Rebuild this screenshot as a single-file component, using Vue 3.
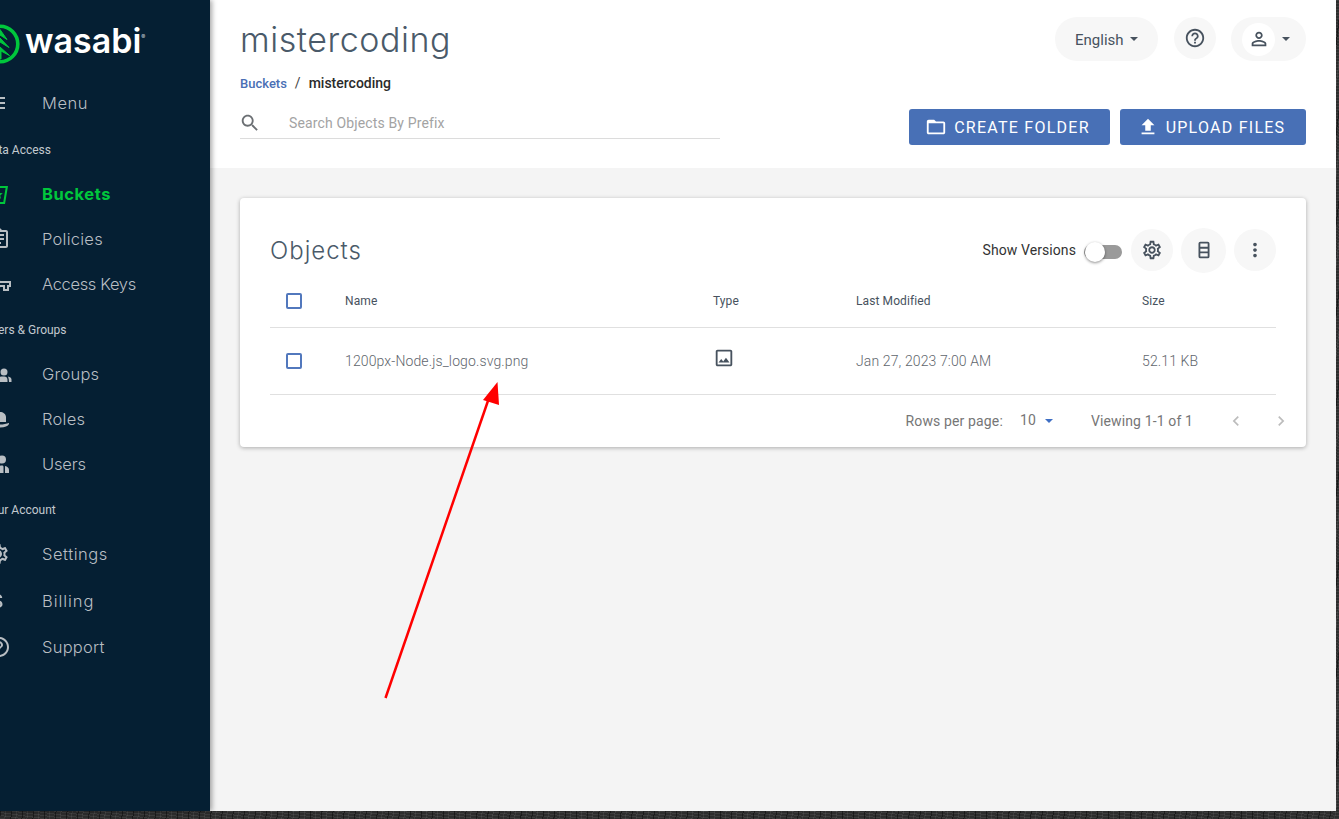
<script setup>
const P = {
  menu: 'M3 18h18v-2H3v2zm0-5h18v-2H3v2zm0-7v2h18V6H3z',
  bucket: 'M2 4h20l-3 18H5L2 4zm2.400 2 2.300 14h10.600l2.300-14H4.400zM12 8l1.400 3 3.400.3-2.600 2.200.8 3.300-3-1.800-3 1.800.8-3.300-2.600-2.200 3.400-.3L12 8z',
  policy: 'M19 3h-4.180C14.400 1.840 13.300 1 12 1s-2.400.84-2.820 2H5c-1.100 0-2 .9-2 2v14c0 1.100.9 2 2 2h14c1.100 0 2-.9 2-2V5c0-1.100-.9-2-2-2zm-7-.25c.41 0 .75.34.75.75s-.34.75-.75.75-.75-.34-.75-.75.34-.75.75-.75zM19 19H5V5h14v14zM7 15h7v2H7zm0-4h10v2H7zm0-4h10v2H7z',
  key: 'M22 19h-6v-4h-2.680c-1.140 2.420-3.600 4-6.320 4-3.860 0-7-3.140-7-7s3.140-7 7-7c2.720 0 5.170 1.580 6.320 4H24v6h-2v4zm-4-2h2v-4h2v-2H11.940l-.23-.67C11.010 8.340 9.110 7 7 7c-2.760 0-5 2.240-5 5s2.240 5 5 5c2.110 0 4.010-1.340 4.710-3.330l.23-.67H18v4z',
  groups: 'M18 6.500a3.500 3.500 0 1 1 0 7 3.500 3.500 0 0 1 0-7zM8 20v-1.500c0-2.500 5-4 9-4s4.500 1.500 4.500 4V20H8zm14-5.500c2 .3 3.500 1.500 3.500 3V20H23c0-2-.3-3.800-1-5.500z',
  hat: 'M8 15V9c0-3 3-4 6-4s6 2 6 5v5H8zM5 16.500c3 1.500 13 1.500 18-.500v1c-1 2-4 3.500-9 3.500S6 19 5 17.500v-1z',
  users: 'M16 3.500a4 4 0 1 1 0 8 4 4 0 0 1 0-8zM8 21v-3c0-2.500 4-4.500 8-4.500.8 0 1.500.1 1.500 1.500v6H8zm11-7c2.500.6 4 2 4 4v3h-4v-7z',
  settings: 'M19.430 12.980c.04-.32.07-.64.07-.98 0-.34-.03-.66-.07-.98l2.110-1.650c.19-.15.24-.42.12-.64l-2-3.460c-.09-.16-.26-.25-.44-.25-.06 0-.12.01-.17.03l-2.490 1c-.52-.4-1.080-.73-1.690-.98l-.38-2.650C14.460 2.180 14.250 2 14 2h-4c-.25 0-.46.18-.49.42l-.38 2.650c-.61.25-1.170.59-1.690.98l-2.490-1c-.06-.02-.12-.03-.18-.03-.17 0-.34.09-.43.25l-2 3.460c-.13.22-.07.49.12.64l2.110 1.650c-.04.32-.07.65-.07.98 0 .33.03.66.07.98l-2.110 1.650c-.19.15-.24.42-.12.64l2 3.460c.09.16.26.25.44.25.06 0 .12-.01.17-.03l2.490-1c.52.4 1.080.73 1.690.98l.38 2.650c.03.24.24.42.49.42h4c.25 0 .46-.18.49-.42l.38-2.650c.61-.25 1.170-.59 1.690-.98l2.490 1c.06.02.12.03.18.03.17 0 .34-.09.43-.25l2-3.460c.12-.22.07-.49-.12-.64l-2.110-1.650zm-1.980-1.710c.04.31.05.52.05.73 0 .21-.02.43-.05.73l-.14 1.130.89.7 1.080.84-.7 1.210-1.270-.51-1.040-.42-.9.68c-.43.32-.84.56-1.250.73l-1.060.43-.16 1.130-.2 1.350h-1.400l-.19-1.350-.16-1.130-1.060-.43c-.43-.18-.83-.41-1.230-.71l-.91-.7-1.060.43-1.270.51-.7-1.210 1.080-.84.89-.7-.14-1.130c-.03-.31-.05-.54-.05-.74s.02-.43.05-.73l.14-1.130-.89-.7-1.080-.84.7-1.210 1.270.51 1.040.42.9-.68c.43-.32.84-.56 1.250-.73l1.060-.43.16-1.130.2-1.350h1.390l.19 1.350.16 1.130 1.060.43c.43.18.83.41 1.230.71l.91.7 1.060-.43 1.270-.51.7 1.210-1.070.85-.89.7.14 1.130zM12 8c-2.210 0-4 1.790-4 4s1.790 4 4 4 4-1.790 4-4-1.790-4-4-4zm0 6c-1.100 0-2-.9-2-2s.9-2 2-2 2 .9 2 2-.9 2-2 2z',
  dollar: 'M11.800 10.900c-2.270-.59-3-1.200-3-2.150 0-1.090 1.010-1.850 2.700-1.850 1.780 0 2.440.85 2.500 2.100h2.210c-.07-1.720-1.120-3.300-3.210-3.810V3h-3v2.160c-1.940.42-3.500 1.680-3.500 3.610 0 2.310 1.910 3.460 4.700 4.130 2.500.6 3 1.480 3 2.410 0 .69-.49 1.790-2.700 1.790-2.060 0-2.870-.92-2.980-2.100h-2.200c.12 2.190 1.760 3.420 3.680 3.830V21h3v-2.150c1.950-.37 3.500-1.500 3.500-3.550 0-2.840-2.430-3.810-4.700-4.400z',
  help: 'M11 18h2v-2h-2v2zm1-16C6.480 2 2 6.480 2 12s4.480 10 10 10 10-4.480 10-10S17.520 2 12 2zm0 18c-4.410 0-8-3.590-8-8s3.590-8 8-8 8 3.590 8 8-3.590 8-8 8zm0-14c-2.210 0-4 1.790-4 4h2c0-1.100.9-2 2-2s2 .9 2 2c0 2-3 1.750-3 5h2c0-2.250 3-2.500 3-5 0-2.210-1.790-4-4-4z',
  person: 'M12 5.900c1.160 0 2.100.94 2.100 2.100s-.94 2.100-2.100 2.100S9.900 9.160 9.900 8s.94-2.100 2.100-2.100m0 9c2.970 0 6.100 1.460 6.100 2.100v1.100H5.900V17c0-.64 3.130-2.100 6.100-2.100M12 4C9.790 4 8 5.790 8 8s1.790 4 4 4 4-1.790 4-4-1.790-4-4-4zm0 9c-2.670 0-8 1.340-8 4v3h16v-3c0-2.660-5.330-4-8-4z',
  folder: 'M20 6h-8l-2-2H4c-1.100 0-1.990.9-1.990 2L2 18c0 1.100.9 2 2 2h16c1.100 0 2-.9 2-2V8c0-1.100-.9-2-2-2zm0 12H4V8h16v10z',
  upload: 'M9 16h6v-6h4l-7-7-7 7h4zm-4 2h14v2H5z',
  image: 'M19 5v14H5V5h14m0-2H5c-1.100 0-2 .9-2 2v14c0 1.100.9 2 2 2h14c1.100 0 2-.9 2-2V5c0-1.100-.9-2-2-2zm-4.860 8.860l-3 3.870L9 13.140 6 17h12l-3.860-5.140z',
  more: 'M12 8c1.100 0 2-.9 2-2s-.9-2-2-2-2 .9-2 2 .9 2 2 2zm0 2c-1.100 0-2 .9-2 2s.9 2 2 2 2-.9 2-2-.9-2-2-2zm0 6c-1.100 0-2 .9-2 2s.9 2 2 2 2-.9 2-2-.9-2-2-2z',
  search: 'M15.500 14h-.79l-.28-.27C15.410 12.590 16 11.110 16 9.500 16 5.910 13.090 3 9.500 3S3 5.910 3 9.500 5.910 16 9.500 16c1.610 0 3.090-.59 4.230-1.570l.27.28v.79l5 4.990L20.490 19l-4.990-5zm-6 0C7.010 14 5 11.990 5 9.500S7.010 5 9.500 5 14 7.010 14 9.500 11.990 14 9.500 14z',
  left: 'M15.410 7.410L14 6l-6 6 6 6 1.410-1.410L10.830 12z',
  right: 'M10 6L8.590 7.410 13.170 12l-4.580 4.590L10 18l6-6z',
  columns: 'M8 3h8a2 2 0 0 1 2 2v14a2 2 0 0 1-2 2H8a2 2 0 0 1-2-2V5a2 2 0 0 1 2-2zm0 2v3.500h8V5H8zm0 5.500v3h8v-3H8zm0 5V19h8v-3.500H8z'
}

const nav = [
  { type: 'item', label: 'Menu', icon: P.menu, cls: 'gap1 wide', vb: '2 0 24 24' },
  { type: 'group', label: 'Data Access' },
  { type: 'item', label: 'Buckets', icon: P.bucket, cls: 'active wide' },
  { type: 'item', label: 'Policies', icon: P.policy, vb: '-1 0 24 24' },
  { type: 'item', label: 'Access Keys', icon: P.key, cls: 'tight', vb: '-1 0 24 24' },
  { type: 'group', label: 'Users & Groups' },
  { type: 'item', label: 'Groups', icon: P.groups },
  { type: 'item', label: 'Roles', icon: P.hat },
  { type: 'item', label: 'Users', icon: P.users, cls: 'snug' },
  { type: 'group', label: 'Your Account' },
  { type: 'item', label: 'Settings', icon: P.settings, cls: 'gap2 wide' },
  { type: 'item', label: 'Billing', icon: P.dollar, cls: 'gap1 wider' },
  { type: 'item', label: 'Support', icon: P.help, vb: '-1 0 24 24' }
]
</script>

<template>
  <div class="screen">
    <div class="window">
      <aside class="sidebar">
        <div class="logo">
          <svg class="logo-mark" viewBox="0 0 40 40">
            <circle cx="20" cy="20" r="17.800" fill="none" stroke="#00c73c" stroke-width="3.600" />
            <path d="M20 5.500l7 10-7-4.500-7 4.500zM20 14l9 9.500-9-5.500-9 5.500zM20 23l9.500 8.500-8.500-4.500v8h-2v-8l-8.500 4.500z" fill="#00c73c" stroke="#00c73c" stroke-width="1" />
          </svg>
          <span class="logo-text">wasabi</span>
          <span class="logo-reg">®</span>
        </div>
        <nav>
          <template v-for="n in nav" :key="n.label">
            <div v-if="n.type === 'group'" class="group">{{ n.label }}</div>
            <div v-else class="item" :class="n.cls">
              <svg class="nav-icon" :viewBox="n.vb || '0 0 24 24'"><path :d="n.icon" fill="currentColor" /></svg>
              <span class="item-label">{{ n.label }}</span>
            </div>
          </template>
        </nav>
      </aside>

      <main class="main">
        <header class="head">
          <div class="head-left">
            <h1>mistercoding</h1>
            <div class="crumbs"><a>Buckets</a><i>/</i><b>mistercoding</b></div>
            <div class="search">
              <svg viewBox="0 0 24 24"><path :d="P.search" fill="#6b6f73" /></svg>
              <span>Search Objects By Prefix</span>
            </div>
          </div>
          <div class="head-right">
            <div class="tools">
              <div class="pill lang"><span class="lang-text">English</span><span class="caret"></span></div>
              <div class="round"><svg viewBox="0 0 24 24"><path :d="P.help" fill="#47525e" /></svg></div>
              <div class="pill user">
                <span class="avatar"><svg viewBox="0 0 24 24"><path :d="P.person" fill="#47525e" /></svg></span>
                <span class="caret"></span>
              </div>
            </div>
            <div class="actions">
              <button class="btn folder"><svg viewBox="0 0 24 24"><path :d="P.folder" fill="#fff" /></svg>CREATE FOLDER</button>
              <button class="btn upload"><svg viewBox="0 0 24 24"><path :d="P.upload" fill="#fff" /></svg>UPLOAD FILES</button>
            </div>
          </div>
        </header>

        <section class="body">
          <div class="card">
            <div class="card-head">
              <h2>Objects</h2>
              <div class="card-tools">
                <span class="versions">Show Versions</span>
                <span class="switch"><span class="thumb"></span></span>
                <span class="tool gear"><svg viewBox="0 0 24 24"><path :d="P.settings" fill="#47525e" /></svg></span>
                <span class="tool cols"><svg viewBox="0 0 24 24"><path :d="P.columns" fill="#47525e" /></svg></span>
                <span class="tool"><svg viewBox="0 0 24 24"><path :d="P.more" fill="#47525e" /></svg></span>
              </div>
            </div>
            <div class="row row-head">
              <span class="check"></span>
              <span>Name</span><span>Type</span><span>Last Modified</span><span>Size</span>
            </div>
            <div class="row row-body">
              <span class="check"></span>
              <span>1200px-Node.js_logo.svg.png</span>
              <span class="type"><svg viewBox="0 0 24 24"><path :d="P.image" fill="#47525e" /></svg></span>
              <span>Jan 27, 2023 7:00 AM</span>
              <span>52.11 KB</span>
            </div>
            <div class="pager">
              <span class="rows">Rows per page:</span>
              <span class="count">10</span>
              <span class="caret blue"></span>
              <span class="viewing">Viewing 1-1 of 1</span>
              <svg class="chev" viewBox="0 0 24 24"><path :d="P.left" fill="#bcbcbc" /></svg>
              <svg class="chev next" viewBox="0 0 24 24"><path :d="P.right" fill="#bcbcbc" /></svg>
            </div>
          </div>
        </section>
      </main>
    </div>
    <svg class="arrow" width="1339" height="819" viewBox="0 0 1339 819">
      <path d="M385.500 698 490 395" stroke="#ff0000" stroke-width="2.500" fill="none" />
      <path d="M497.500 382 499 405 483 400z" fill="#ff0000" />
    </svg>
  </div>
</template>

<style>
html, body { margin: 0; background: #2c2c2c; }
</style>

<style scoped>
.screen {
  position: relative;
  width: 1339px;
  height: 819px;
  overflow: hidden;
  background:
    repeating-linear-gradient(97deg, rgba(0,0,0,.45) 0 1px, transparent 1px 5px, rgba(255,255,255,.07) 5px 6px, transparent 6px 11px),
    repeating-linear-gradient(8deg, rgba(255,255,255,.07) 0 1px, transparent 1px 3px),
    #2d2d2d;
  font-family: Roboto, "Liberation Sans", sans-serif;
}
.window { display: flex; width: 1336px; height: 811px; background: #f4f4f4; }

.sidebar {
  flex: 0 0 210px;
  height: 811px;
  background: #051f33;
  box-shadow: 2px 0 5px rgba(0, 0, 0, .35);
  overflow: hidden;
  position: relative;
  z-index: 2;
}
.logo { display: flex; align-items: center; height: 80px; margin-left: -20px; padding-top: 8px; box-sizing: border-box; color: #fff; }
.logo-mark { flex: 0 0 40px; width: 40px; height: 40px; }
.logo-text { margin-left: 5px; font: 600 34px/1 Inter, sans-serif; padding-bottom: 6px; }
.logo-reg { font: 400 6px/1 Inter, sans-serif; align-self: flex-start; margin-top: 26px; color: #c9d1d8; }

.group { height: 45px; line-height: 48px; margin-left: -16px; font-size: 12px; color: #c3c9cf; white-space: nowrap; }
.item { display: flex; align-items: center; height: 45px; margin-left: -14px; color: #b9bec3; font: 300 16.500px/1 Inter, sans-serif; letter-spacing: .25px; }
.item-label { padding-top: 2px; }
.item.gap1 { margin-bottom: 1px; }
.item.gap2 { margin-bottom: 2px; }
.item.wide { letter-spacing: .55px; }
.item.wider { letter-spacing: .95px; }
.item.snug { letter-spacing: -.15px; }
.item.tight { letter-spacing: -.35px; }
.item.active { color: #00c73c; font-weight: 700; }
.nav-icon { flex: 0 0 24px; width: 24px; height: 24px; margin-right: 32px; overflow: visible; }

.main { flex: 1; display: flex; flex-direction: column; min-width: 0; }
.head { display: flex; justify-content: space-between; height: 168px; box-sizing: border-box; padding: 0 30px; background: #fff; }
.head-left { width: 480px; }
h1 { margin: 0; padding-top: 20px; font: 300 34px/40px Inter, sans-serif; color: #4a5a69; letter-spacing: .55px; }
.crumbs { display: flex; align-items: center; height: 20px; margin-top: 13px; font-size: 14px; color: #2b2b2b; }
.crumbs a { color: #4a6fb5; font-size: 13px; font-weight: 500; }
.crumbs i { font-style: normal; margin: 0 8px; color: #444; }
.crumbs b { font-weight: 500; }
.search { display: flex; align-items: center; height: 35px; margin-top: 11px; padding-top: 4px; border-bottom: 1px solid #dcdcdc; box-sizing: border-box; font-size: 14px; letter-spacing: .14px; color: #a3a3a3; }
.search svg { width: 22px; height: 22px; flex: none; margin-left: -1px; margin-right: 28px; }

.head-right { display: flex; flex-direction: column; align-items: flex-end; padding-top: 17px; }
.tools { display: flex; align-items: flex-start; }
.pill { display: flex; align-items: center; height: 44px; border-radius: 22px; background: #f7f7f7; color: #47525e; font-size: 15px; box-sizing: border-box; }
.lang { width: 103px; padding-left: 20px; }
.lang-text { padding-top: 2px; }
.lang .caret { margin-left: 6px; }
.caret { display: inline-block; width: 0; height: 0; border-left: 4.500px solid transparent; border-right: 4.500px solid transparent; border-top: 4.500px solid #47525e; }
.round { display: flex; align-items: center; justify-content: center; width: 42px; height: 42px; margin: 0 15px 0 16px; border-radius: 50%; background: #f7f7f7; }
.round svg { width: 22px; height: 22px; }
.user { width: 75px; padding-left: 11px; }
.avatar { display: flex; align-items: center; justify-content: center; width: 33px; height: 33px; border-radius: 50%; background: #fff; }
.avatar svg { width: 22px; height: 22px; }
.user .caret { margin-left: 7px; }

.actions { display: flex; gap: 10px; margin-top: 48px; }
.btn { display: flex; align-items: center; justify-content: center; height: 36px; border: 0; border-radius: 3px; background: #4870b6; color: #fff; font: 400 16px/1 Roboto, sans-serif; letter-spacing: 1.250px; padding: 2px 0 0; }
.btn svg { width: 22px; height: 22px; margin: -2px 7px 0 -4px; }
.btn.folder { width: 201px; }
.btn.upload { width: 186px; }

.body { flex: 1; padding: 30px 30px 0; }
.card { height: 249px; padding: 0 30px; box-sizing: border-box; background: #fff; border-radius: 4px; box-shadow: 0 1px 4px rgba(0, 0, 0, .3); }
.card-head { display: flex; justify-content: space-between; align-items: flex-start; height: 81px; padding-top: 30px; box-sizing: border-box; }
h2 { margin: 0; padding-top: 9px; font: 300 24px/28px Inter, sans-serif; color: #4a5a69; letter-spacing: 1px; }
.card-tools { display: flex; align-items: center; height: 44px; }
.versions { font-size: 14px; letter-spacing: .08px; color: #333; margin-right: 8px; }
.switch { display: block; width: 38px; height: 14px; margin: 3px 9px 0 0; border-radius: 7px; background: #9a9a9a; position: relative; }
.thumb { position: absolute; left: 1px; top: -3px; width: 20px; height: 20px; border-radius: 50%; background: #fff; box-shadow: 0 1px 3px rgba(0, 0, 0, .45); }
.tool { display: flex; align-items: center; justify-content: center; width: 42px; height: 42px; border-radius: 50%; background: #f7f7f7; }
.tool svg { width: 22px; height: 22px; }
.gear { margin-right: 8px; }
.cols { width: 45px; height: 45px; margin-right: 8px; }

.row { display: grid; grid-template-columns: 75px 368px 143px 286px 1fr; align-items: center; font-size: 12px; letter-spacing: .1px; color: #47525e; border-bottom: 1px solid #e0e0e0; }
.row-head { height: 49px; padding-bottom: 5px; box-sizing: border-box; }
.row-body { height: 66px; font-size: 14px; letter-spacing: .12px; font-weight: 300; color: #5f666d; }
.check { display: block; width: 16px; height: 16px; margin-left: 16px; box-sizing: border-box; border: 2px solid #5278bd; border-radius: 2px; }
.type { display: flex; padding-bottom: 6px; }
.type svg { width: 22px; height: 22px; }

.pager { display: flex; align-items: center; justify-content: flex-end; height: 52px; font-size: 14px; letter-spacing: .13px; color: #767676; }
.rows { margin-right: 17px; }
.count { margin-right: 9px; padding-bottom: 2px; }
.caret.blue { border-top-color: #3f6fc4; }
.viewing { margin-left: 38px; margin-right: 33px; }
.chev { width: 20px; height: 20px; margin-right: 25px; }
.chev.next { margin-right: -15px; }

.arrow { position: absolute; left: 0; top: 0; pointer-events: none; z-index: 5; }
</style>
